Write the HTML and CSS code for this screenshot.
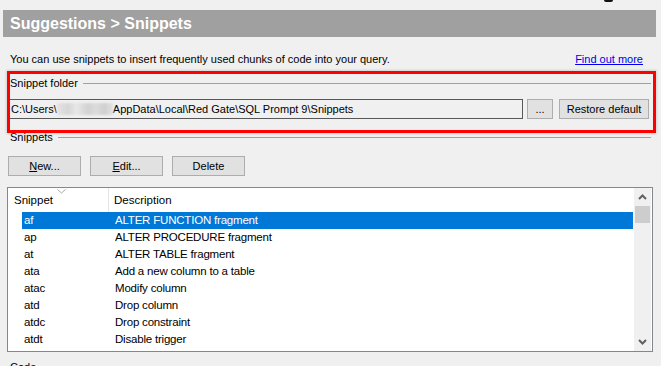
FILE: index.html
```html
<!DOCTYPE html>
<html>

<head>
  <title>Suggestions &gt; Snippets</title>
  <link rel="stylesheet" href="styles.css">
</head>

<body>
  <div class="page">
    <div class="top-strip"><span class="stray"></span></div>

    <div class="title-bar">Suggestions &gt; Snippets</div>

    <div class="intro">
      <span>You can use snippets to insert frequently used chunks of code into your query.</span>
      <a href="#" class="link">Find out more</a>
    </div>

    <div class="group folder-group">
      <div class="group-head"><span>Snippet folder</span><span class="group-line"></span></div>
      <div class="path-row">
        <div class="path-box">C:\Users\<span class="blurred"></span>AppData\Local\Red Gate\SQL Prompt 9\Snippets</div>
        <button class="btn btn-browse">...</button>
        <button class="btn btn-restore">Restore default</button>
      </div>
      <div class="highlight"></div>
    </div>

    <div class="group snippets-group">
      <div class="group-head"><span>Snippets</span><span class="group-line"></span></div>
      <div class="actions">
        <button class="btn btn-action"><u>N</u>ew...</button>
        <button class="btn btn-action"><u>E</u>dit...</button>
        <button class="btn btn-action">Delete</button>
      </div>

      <div class="list">
        <div class="list-body">
          <div class="list-header">
            <div class="col-name">Snippet
              <svg class="sort" width="9" height="5" viewBox="0 0 9 5"><path d="M0.5 0.5 L4.5 4 L8.5 0.5" fill="none" stroke="#a8a8a8" stroke-width="1"/></svg>
            </div>
            <div class="col-desc">Description</div>
          </div>
          <div id="rows"></div>
        </div>
        <div class="scrollbar">
          <svg class="arrow" width="9" height="6" viewBox="0 0 9 6"><path d="M1 5 L4.5 1.5 L8 5" fill="none" stroke="#606060" stroke-width="2"/></svg>
          <div class="thumb"></div>
          <div class="track"></div>
          <svg class="arrow" width="9" height="6" viewBox="0 0 9 6"><path d="M1 1 L4.5 4.5 L8 1" fill="none" stroke="#606060" stroke-width="2"/></svg>
        </div>
      </div>
    </div>

    <div class="group code-group">
      <div class="group-head"><span>Code</span><span class="group-line"></span></div>
    </div>
  </div>

  <script>
    const snippets = [
      ["af", "ALTER FUNCTION fragment"],
      ["ap", "ALTER PROCEDURE fragment"],
      ["at", "ALTER TABLE fragment"],
      ["ata", "Add a new column to a table"],
      ["atac", "Modify column"],
      ["atd", "Drop column"],
      ["atdc", "Drop constraint"],
      ["atdt", "Disable trigger"]
    ];

    let html = "";
    snippets.forEach(function (s, i) {
      html += '<div class="row' + (i === 0 ? ' selected' : '') + '">' +
        '<span class="cell-name">' + s[0] + '</span>' +
        '<span class="cell-desc">' + s[1] + '</span></div>';
    });
    document.getElementById("rows").innerHTML = html;
  </script>
</body>

</html>
```

FILE: styles.css
```css
body {
  margin: 0;
  background-color: #f0f0f0;
  font-family: "Liberation Sans", Arial, sans-serif;
  font-size: 11px;
  color: #000;
}

.page {
  width: 661px;
  height: 366px;
  overflow: hidden;
}

.top-strip {
  height: 10px;
  display: flex;
  justify-content: flex-end;
  padding-right: 48px;
}

.stray {
  width: 9px;
  height: 2px;
  background-color: #111;
  border-radius: 0 0 3px 3px;
}

.title-bar {
  margin: 0 5px 0 3px;
  height: 27px;
  line-height: 27px;
  padding-left: 7px;
  background-color: #a0a0a0;
  color: #fff;
  font-family: "Liberation Sans", Arial, sans-serif;
  font-weight: bold;
  font-size: 16px;
}

.intro {
  display: flex;
  justify-content: space-between;
  margin-top: 15px;
  padding: 0 18px 0 10px;
  height: 14px;
  line-height: 14px;
}

.link {
  color: #0000ee;
  text-decoration: underline;
}

.group {
  position: relative;
}

.group-head {
  display: flex;
  align-items: center;
  padding: 0 10px 0 10px;
  height: 14px;
  line-height: 14px;
}

.group-line {
  flex: 1;
  margin-left: 5px;
  border-top: 1px solid #a0a0a0;
}

.folder-group {
  margin-top: 10px;
}

.path-row {
  display: flex;
  margin: 9px 0 0 8px;
  height: 20px;
}

.path-box {
  width: 511px;
  height: 18px;
  line-height: 18px;
  border: 1px solid #575757;
  padding-left: 2px;
  white-space: nowrap;
  overflow: hidden;
}

.blurred {
  display: inline-block;
  width: 56px;
  height: 12px;
  vertical-align: -2px;
  background: linear-gradient(90deg, #e4e4e4 0%, #d6d6d6 20%, #e8e8e8 35%, #d2d2d2 55%, #dcdcdc 70%, #cfcfcf 85%, #e2e2e2 100%);
  filter: blur(1px);
}

.btn {
  font-family: "Liberation Sans", Arial, sans-serif;
  font-size: 11px;
  color: #000;
  background-color: #e1e1e1;
  border: 1px solid #adadad;
  padding: 0;
  height: 20px;
  margin: 0;
}

.btn-browse {
  width: 26px;
  margin-left: 4px;
}

.btn-restore {
  width: 90px;
  margin-left: 6px;
}

.highlight {
  position: absolute;
  left: 7px;
  top: -5px;
  width: 643px;
  height: 56px;
  border: 3px solid #f00;
  box-shadow: 0 0 2px 1px rgba(0, 0, 0, 0.12);
}

.snippets-group {
  margin-top: 11px;
}

.actions {
  display: flex;
  gap: 9px;
  margin: 12px 0 0 8px;
}

.btn-action {
  width: 73px;
}

.list {
  display: flex;
  margin: 11px 0 0 7px;
  width: 644px;
  height: 163px;
  border: 1px solid #828790;
  background-color: #fff;
  font-family: "Liberation Sans", Arial, sans-serif;
  font-size: 11.5px;
}

.list-body {
  flex: 1;
}

.list-header {
  display: flex;
  height: 24px;
  line-height: 24px;
}

.col-name {
  position: relative;
  width: 94px;
  padding-left: 6px;
  border-right: 1px solid #e5e5e5;
}

.sort {
  position: absolute;
  left: 49px;
  top: 1px;
}

.col-desc {
  padding-left: 5px;
}

.row {
  display: flex;
  height: 17px;
  line-height: 17px;
  margin-left: 14px;
  letter-spacing: -0.2px;
}

.row.selected {
  background-color: #0078d7;
  color: #fff;
}

.cell-name {
  width: 91px;
  padding-left: 2px;
}

.scrollbar {
  width: 17px;
  background-color: #f0f0f0;
  display: flex;
  flex-direction: column;
  align-items: center;
  border-left: 1px solid #fff;
  border-right: 1px solid #fff;
}

.arrow {
  margin: 6px 0 6px 0;
}

.thumb {
  width: 15px;
  height: 17px;
  background-color: #cdcdcd;
}

.track {
  flex: 1;
}

.code-group {
  margin-top: 8px;
}
```
